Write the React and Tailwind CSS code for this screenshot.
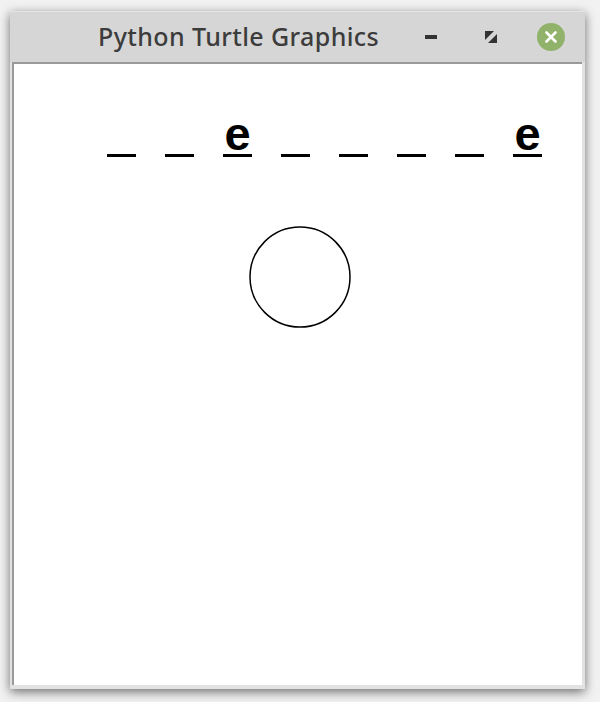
import React from "react";

const slots = ["", "", "e", "", "", "", "", "e"]; // guessed word so far

const Slot = ({ letter }) => (
  <div className="w-[29px] flex flex-col items-center">
    <span className="h-[40px] leading-[40px] text-[47px] font-bold text-black">{letter || "\u00a0"}</span>
    <div className="w-[29px] h-[3px] bg-black" />
  </div>
);

export default function App() {
  return (
    <div className="w-[600px] h-[702px] bg-[#f2f2f2] pt-[11px] pl-[10px]">
      <div className="w-[575px] h-[678px] flex flex-col bg-[#e2e2e2] shadow-[0_3px_10px_rgba(0,0,0,0.55)]">
        {/* title bar */}
        <div className="h-[51px] shrink-0 flex items-center bg-[#d6d6d6] border-t border-[#e4e4e4]">
          <span className="ml-[88px] text-[25px] tracking-[0.4px] font-medium text-[#3c3c3c] font-['Noto_Sans',sans-serif]">
            Python Turtle Graphics
          </span>
          <div className="ml-auto mr-[20px] flex items-center gap-[32px]">
            <div className="w-[28px] h-[28px] flex items-center justify-center">
              <div className="w-[12px] h-[4px] bg-[#333]" />
            </div>
            <div className="w-[28px] h-[28px] flex items-center justify-center">
              <svg width="12" height="12" viewBox="0 0 12 12">
                <polygon points="0,0 9,0 0,9" fill="#333" />
                <polygon points="12,3 12,12 3,12" fill="#333" />
              </svg>
            </div>
            <div className="w-[28px] h-[28px] rounded-full bg-[#91b26b] flex items-center justify-center">
              <svg width="12" height="12" viewBox="0 0 12 12">
                <path d="M1.5 1.5 L10.5 10.5 M10.5 1.5 L1.5 10.5" stroke="#fff" strokeWidth="2.6" strokeLinecap="round" />
              </svg>
            </div>
          </div>
        </div>

        {/* canvas */}
        <div className="flex-1 pl-[2px] pr-[3px] pb-[4px]">
          <div className="h-full bg-white border-t-2 border-l-2 border-[#9a9a9a] font-['Liberation_Sans',Arial,sans-serif]">
            <div className="ml-[93px] mt-[50px] flex gap-[29px]">
              {slots.map((l, i) => (
                <Slot key={i} letter={l} />
              ))}
            </div>
            <svg className="ml-[235px] mt-[69px]" width="102" height="102" viewBox="0 0 102 102">
              <circle cx="51" cy="51" r="50" fill="none" stroke="#000" strokeWidth="1.5" />
            </svg>
          </div>
        </div>
      </div>
    </div>
  );
}
